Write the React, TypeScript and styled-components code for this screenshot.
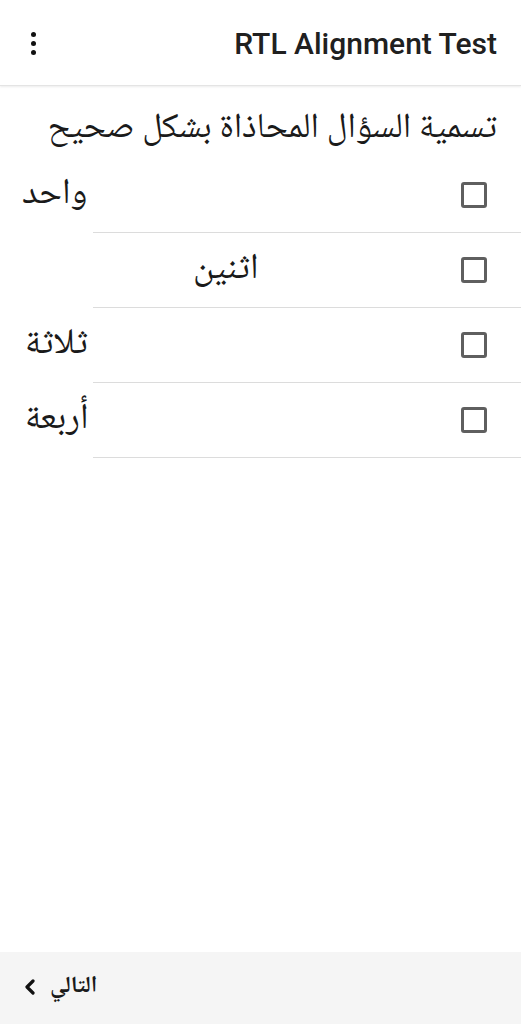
import React from 'react';
import styled, { createGlobalStyle } from 'styled-components';

const GlobalStyle = createGlobalStyle`
    html, body {
        margin: 0;
        padding: 0;
        background: #fff;
    }
    * {
        box-sizing: border-box;
    }
`;

const Page = styled.div`
    direction: rtl;
    height: 1024px;
    display: flex;
    flex-direction: column;
    font-family: "Noto Naskh Arabic", "Noto Sans Arabic", "DejaVu Sans", sans-serif;
    color: #1a1a1a;
`;

const TopBar = styled.header`
    height: 86px;
    display: flex;
    align-items: center;
    justify-content: space-between;
    padding: 2px 24px 0 22px;
    border-bottom: 1px solid #e4e4e4;
    box-shadow: 0 1px 2px rgba(0, 0, 0, 0.08);
`;

const Title = styled.h1`
    margin: 0;
    font-family: Roboto, "Liberation Sans", sans-serif;
    font-size: 30px;
    font-weight: 500;
    color: #202020;
    direction: ltr;
`;

const MenuButton = styled.button`
    width: 22px;
    height: 40px;
    border: none;
    background: none;
    padding: 0;
    display: flex;
    flex-direction: column;
    align-items: center;
    justify-content: center;
    gap: 4px;
`;

const Dot = styled.span`
    width: 5px;
    height: 5px;
    border-radius: 50%;
    background: #111;
`;

const Content = styled.main`
    flex: 1;
`;

const Question = styled.div`
    height: 72px;
    padding: 24px 24px 0 0;
    font-size: 35px;
    line-height: 40px;
`;

const Row = styled.div`
    display: flex;
    flex-direction: column;
`;

const RowBody = styled.label`
    height: 74px;
    display: flex;
    align-items: center;
    padding-right: 34px;
`;

const Box = styled.span`
    width: 26px;
    height: 26px;
    border: 3px solid #5f5f5f;
    border-radius: 3px;
    flex-shrink: 0;
`;

const OptionText = styled.span<{ $indent: number }>`
    margin-right: auto;
    margin-left: ${p => p.$indent}px;
    font-size: 36px;
    line-height: 42px;
    margin-top: 2px;
`;

const Divider = styled.div`
    height: 1px;
    margin-left: 93px;
    background: #dcdcdc;
`;

const Footer = styled.footer`
    height: 72px;
    background: #f5f5f5;
    display: flex;
    align-items: center;
    justify-content: flex-end;
    padding-left: 24px;
`;

const NextButton = styled.button`
    direction: rtl;
    border: none;
    background: none;
    padding: 0;
    margin-top: -3px;
    display: flex;
    align-items: center;
    gap: 14px;
    font-family: "Noto Naskh Arabic", "Noto Sans Arabic", "DejaVu Sans", sans-serif;
    font-size: 23px;
    font-weight: 700;
    color: #1a1a1a;
`;

const options = [
    { text: 'واحد', indent: 22 },
    { text: 'اثنين', indent: 193 },
    { text: 'ثلاثة', indent: 25 },
    { text: 'أربعة', indent: 25 },
];

export default function App() {
    return (
        <>
            <GlobalStyle />
            <Page>
                <TopBar>
                    <Title>RTL Alignment Test</Title>
                    <MenuButton>
                        <Dot />
                        <Dot />
                        <Dot />
                    </MenuButton>
                </TopBar>
                <Content>
                    <Question>تسمية السؤال المحاذاة بشكل صحيح</Question>
                    {options.map(o => (
                        <Row key={o.text}>
                            <RowBody>
                                <Box />
                                <OptionText $indent={o.indent}>{o.text}</OptionText>
                            </RowBody>
                            <Divider />
                        </Row>
                    ))}
                </Content>
                <Footer>
                    <NextButton>
                        <span>التالي</span>
                        <svg width="12" height="16" viewBox="0 0 12 16">
                            <path d="M9 2 L3 8 L9 14" fill="none" stroke="#111" strokeWidth="3.2" strokeLinecap="round" strokeLinejoin="round" />
                        </svg>
                    </NextButton>
                </Footer>
            </Page>
        </>
    );
}
